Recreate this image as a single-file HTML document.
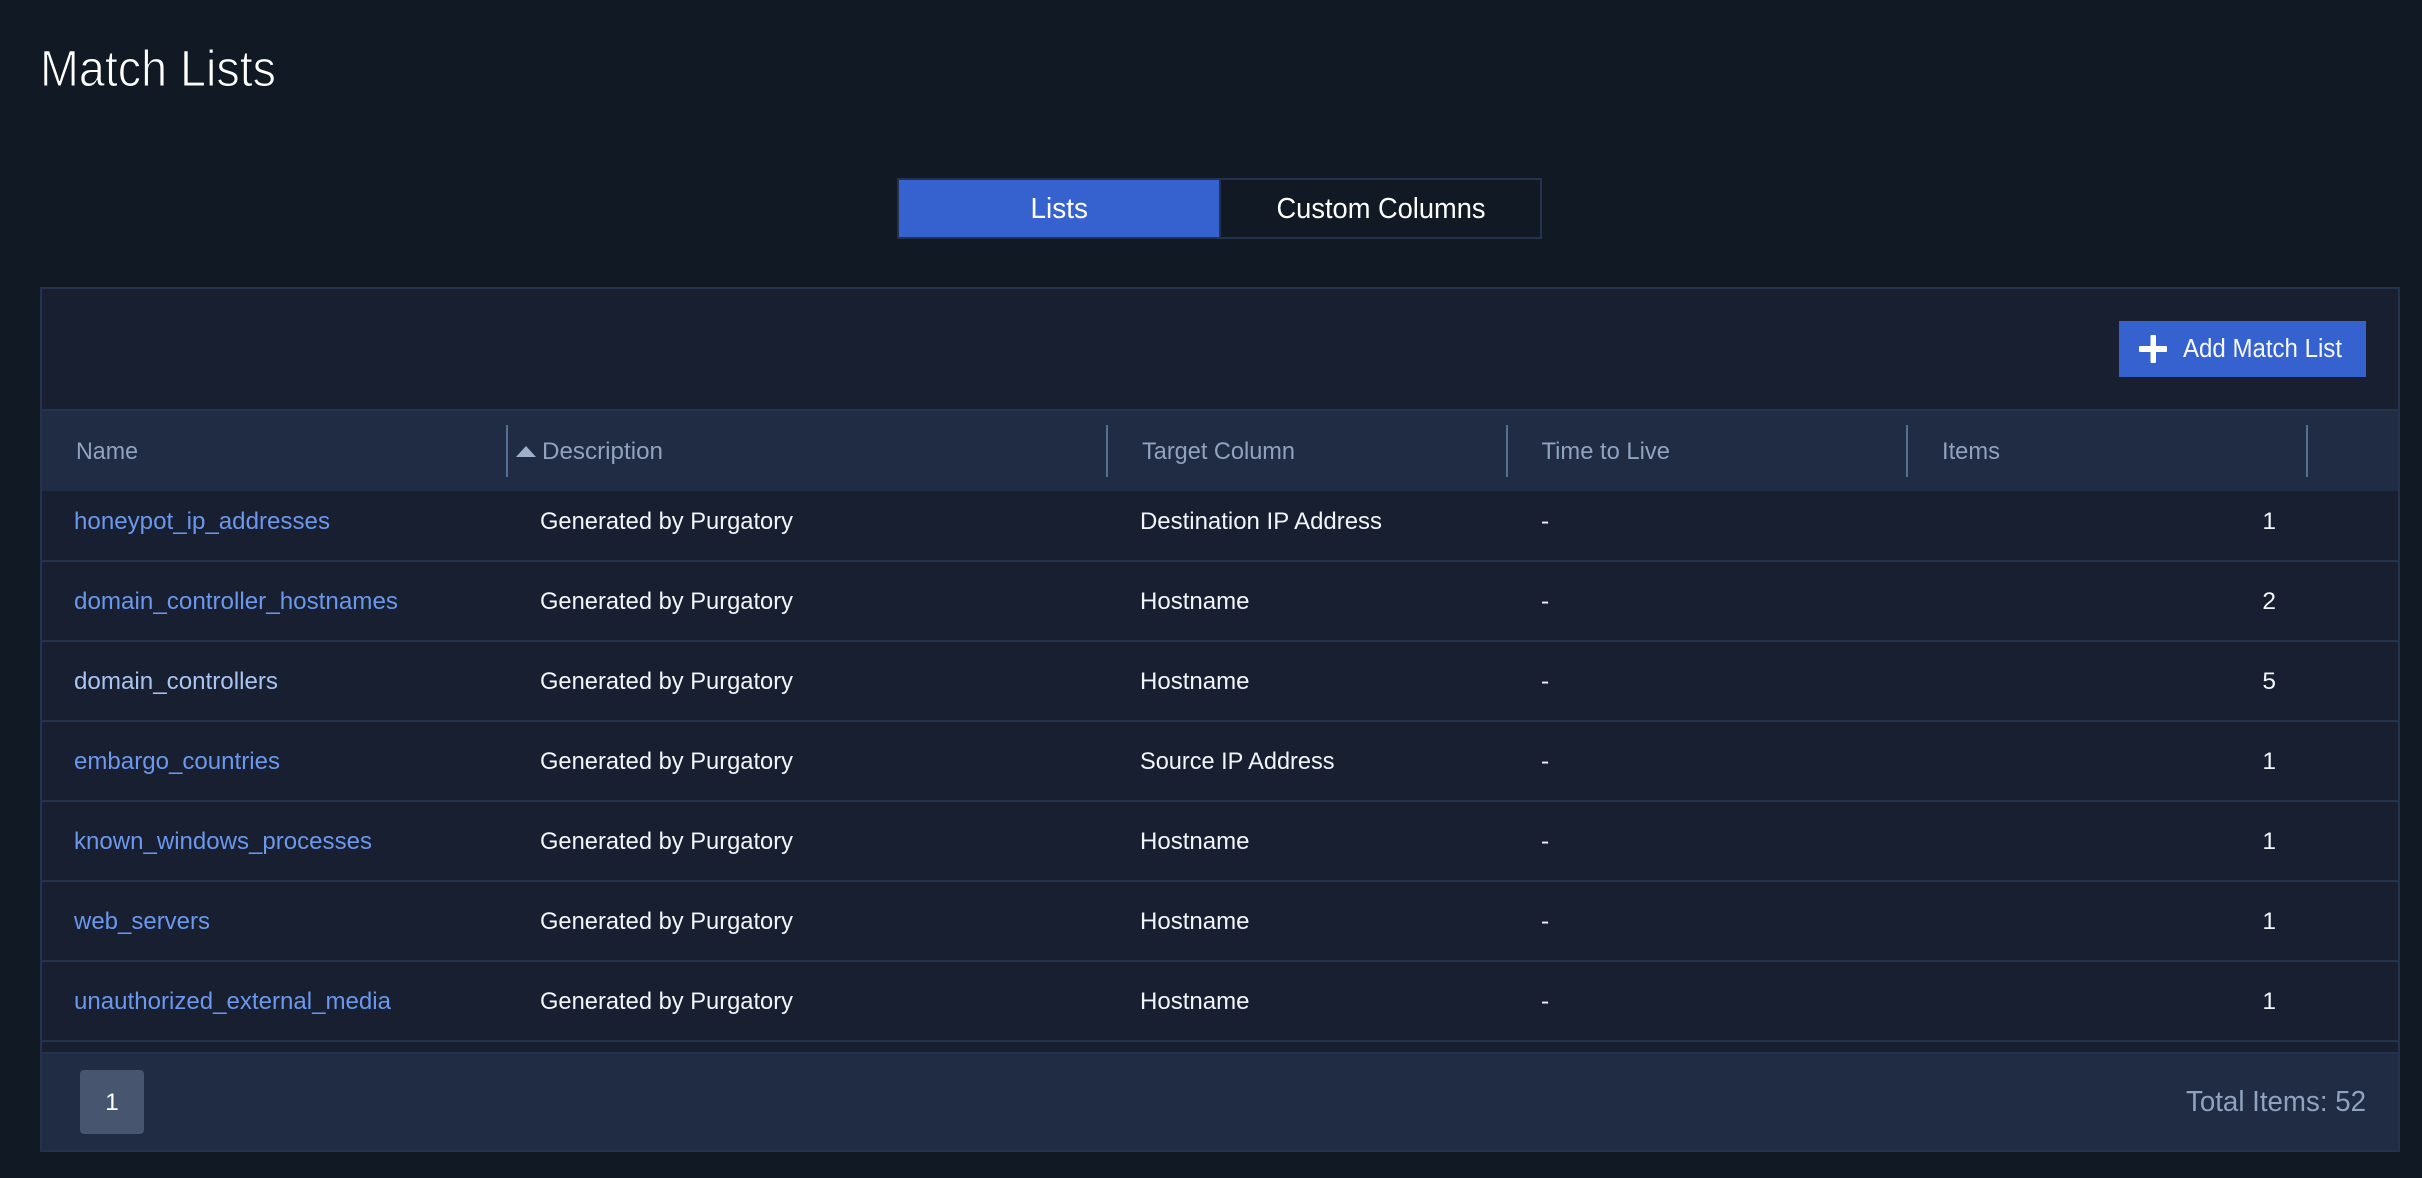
<!DOCTYPE html>
<html><head><meta charset="utf-8"><title>Match Lists</title>
<style>
html,body{margin:0;padding:0;background:#111925;width:2422px;height:1178px;overflow:hidden}
svg{display:block}
text{font-family:"Liberation Sans",sans-serif;font-size:24.5px;fill:#f2f5fa}
.l{fill:#6b97ec}.v{fill:#a9c4f1}.h{fill:#8fa3bf}
</style></head><body>
<svg width="2422" height="1178" viewBox="0 0 2422 1178" xmlns="http://www.w3.org/2000/svg">
<rect width="2422" height="1178" fill="#111925"/>
<text x="40" y="86" textLength="236" lengthAdjust="spacingAndGlyphs" style="font-size:51px;fill:#fff;stroke:#111925;stroke-width:1.1px">Match Lists</text>

<rect x="898" y="179" width="643" height="59" fill="#111925" stroke="#25324d" stroke-width="2"/>
<rect x="899" y="180" width="320" height="57" fill="#3662d0"/>
<rect x="1219" y="180" width="2" height="57" fill="#25324d"/>
<text x="1030.5" y="218" textLength="57.5" lengthAdjust="spacingAndGlyphs" style="font-size:29px;fill:#fff">Lists</text>
<text x="1276.5" y="218" textLength="209" lengthAdjust="spacingAndGlyphs" style="font-size:29px;fill:#fff">Custom Columns</text>

<rect x="40" y="287" width="2360" height="865" fill="#25324d"/>
<rect x="42" y="289" width="2356" height="120" fill="#171f30"/>
<rect x="42" y="411" width="2356" height="80" fill="#202b44"/>
<rect x="42" y="491" width="2356" height="69" fill="#171f30"/>
<rect x="42" y="562" width="2356" height="78" fill="#171f30"/>
<rect x="42" y="642" width="2356" height="78" fill="#171f30"/>
<rect x="42" y="722" width="2356" height="78" fill="#171f30"/>
<rect x="42" y="802" width="2356" height="78" fill="#171f30"/>
<rect x="42" y="882" width="2356" height="78" fill="#171f30"/>
<rect x="42" y="962" width="2356" height="78" fill="#171f30"/>
<rect x="42" y="1042" width="2356" height="10" fill="#171f30"/>
<rect x="42" y="1054" width="2356" height="96" fill="#202b44"/>

<rect x="2119" y="321" width="247" height="56" fill="#3662d0"/>
<rect x="2139" y="346" width="28" height="6" rx="1" fill="#fff"/>
<rect x="2150.5" y="335" width="5.5" height="28" rx="1" fill="#fff"/>
<text x="2183" y="357" textLength="159" lengthAdjust="spacingAndGlyphs" style="font-size:25.5px;fill:#f6f8fc">Add Match List</text>

<g fill="#52708f">
<rect x="506" y="425" width="2" height="52"/>
<rect x="1106" y="425" width="2" height="52"/>
<rect x="1506" y="425" width="2" height="52"/>
<rect x="1906" y="425" width="2" height="52"/>
<rect x="2306" y="425" width="2" height="52"/>
</g>
<polygon points="516,457 526,446 536,457" fill="#9fb1ca"/>
<text class="h" x="76" y="459" textLength="62" lengthAdjust="spacingAndGlyphs">Name</text>
<text class="h" x="542" y="459" textLength="121" lengthAdjust="spacingAndGlyphs">Description</text>
<text class="h" x="1142" y="459" textLength="153" lengthAdjust="spacingAndGlyphs">Target Column</text>
<text class="h" x="1541.5" y="459" textLength="128.5" lengthAdjust="spacingAndGlyphs">Time to Live</text>
<text class="h" x="1942" y="459" textLength="58" lengthAdjust="spacingAndGlyphs">Items</text>

<text class="l" x="74" y="529" textLength="256" lengthAdjust="spacingAndGlyphs">honeypot_ip_addresses</text>
<text x="540" y="529" textLength="253" lengthAdjust="spacingAndGlyphs">Generated by Purgatory</text>
<text x="1140" y="529" textLength="242" lengthAdjust="spacingAndGlyphs">Destination IP Address</text>
<text x="1541" y="529">-</text>
<text x="2276" y="529" text-anchor="end">1</text>

<text class="l" x="74" y="609" textLength="324" lengthAdjust="spacingAndGlyphs">domain_controller_hostnames</text>
<text x="540" y="609" textLength="253" lengthAdjust="spacingAndGlyphs">Generated by Purgatory</text>
<text x="1140" y="609" textLength="109.5" lengthAdjust="spacingAndGlyphs">Hostname</text>
<text x="1541" y="609">-</text>
<text x="2276" y="609" text-anchor="end">2</text>

<text class="v" x="74" y="689" textLength="204" lengthAdjust="spacingAndGlyphs">domain_controllers</text>
<text x="540" y="689" textLength="253" lengthAdjust="spacingAndGlyphs">Generated by Purgatory</text>
<text x="1140" y="689" textLength="109.5" lengthAdjust="spacingAndGlyphs">Hostname</text>
<text x="1541" y="689">-</text>
<text x="2276" y="689" text-anchor="end">5</text>

<text class="l" x="74" y="769" textLength="206" lengthAdjust="spacingAndGlyphs">embargo_countries</text>
<text x="540" y="769" textLength="253" lengthAdjust="spacingAndGlyphs">Generated by Purgatory</text>
<text x="1140" y="769" textLength="194.5" lengthAdjust="spacingAndGlyphs">Source IP Address</text>
<text x="1541" y="769">-</text>
<text x="2276" y="769" text-anchor="end">1</text>

<text class="l" x="74" y="849" textLength="298" lengthAdjust="spacingAndGlyphs">known_windows_processes</text>
<text x="540" y="849" textLength="253" lengthAdjust="spacingAndGlyphs">Generated by Purgatory</text>
<text x="1140" y="849" textLength="109.5" lengthAdjust="spacingAndGlyphs">Hostname</text>
<text x="1541" y="849">-</text>
<text x="2276" y="849" text-anchor="end">1</text>

<text class="l" x="74" y="929" textLength="136" lengthAdjust="spacingAndGlyphs">web_servers</text>
<text x="540" y="929" textLength="253" lengthAdjust="spacingAndGlyphs">Generated by Purgatory</text>
<text x="1140" y="929" textLength="109.5" lengthAdjust="spacingAndGlyphs">Hostname</text>
<text x="1541" y="929">-</text>
<text x="2276" y="929" text-anchor="end">1</text>

<text class="l" x="74" y="1009" textLength="317" lengthAdjust="spacingAndGlyphs">unauthorized_external_media</text>
<text x="540" y="1009" textLength="253" lengthAdjust="spacingAndGlyphs">Generated by Purgatory</text>
<text x="1140" y="1009" textLength="109.5" lengthAdjust="spacingAndGlyphs">Hostname</text>
<text x="1541" y="1009">-</text>
<text x="2276" y="1009" text-anchor="end">1</text>

<rect x="80" y="1070" width="64" height="64" rx="4" fill="#47556f"/>
<text x="112" y="1110" text-anchor="middle" style="fill:#fff">1</text>
<text x="2186" y="1111" textLength="180" lengthAdjust="spacingAndGlyphs" style="font-size:28.5px;fill:#8fa3bf">Total Items: 52</text>
</svg>
</body></html>
